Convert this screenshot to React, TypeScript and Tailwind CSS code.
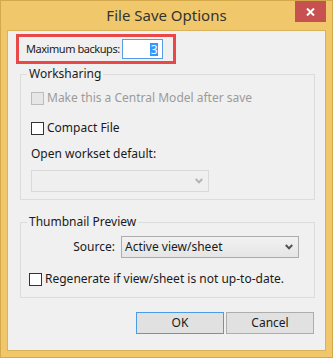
import React from "react"

const FONT = "font-['Segoe_UI','Noto_Sans',sans-serif]"

function Chevron({ color }: { color: string }) {
  return (
    <svg width="8" height="6" viewBox="0 0 8 6" className="shrink-0">
      <polyline points="0.8,1 4,4.4 7.2,1" fill="none" stroke={color} strokeWidth="2" />
    </svg>
  )
}

function Checkbox({ disabled, label }: { disabled?: boolean; label: string }) {
  return (
    <div className="flex items-center gap-[3px] h-[16px]">
      <div
        className={`w-[13px] h-[13px] border ${
          disabled ? "border-[#bcbcbc] bg-[#e6e6e6]" : "border-[#333333] bg-white"
        }`}
      />
      <span className={disabled ? "text-[#9b9b9b]" : "text-[#1a1a1a]"}>{label}</span>
    </div>
  )
}

function Group({
  title,
  className,
  children,
}: {
  title: string
  className: string
  children: React.ReactNode
}) {
  return (
    <div className={`relative border border-[#dcdcdc] ${className}`}>
      <span className="absolute -top-[9px] left-[6px] bg-[#f0f0f0] px-[2px] leading-[16px] text-[#1a1a1a]">
        {title}
      </span>
      {children}
    </div>
  )
}

export default function App() {
  return (
    <div
      className={`relative w-[333px] h-[358px] bg-[#f0c86b] border border-[#d4a94c] flex flex-col text-[12px] ${FONT}`}
    >
      <div className="h-[29px] flex items-center justify-center text-[15px] text-[#333333]">
        File Save Options
      </div>
      <button className="absolute top-0 right-[6px] w-[31px] h-[21px] bg-[#c75050] flex items-center justify-center">
        <svg width="9" height="8" viewBox="0 0 9 8">
          <path d="M1 0.5 L8 7.5 M8 0.5 L1 7.5" stroke="white" strokeWidth="2" />
        </svg>
      </button>

      <div className="ml-[6px] w-[319px] h-[321px] bg-[#f0f0f0] border border-[#d9b25c] flex flex-col">
        <div className="ml-[8px] mt-[3px] w-[160px] h-[30px] border-[3px] border-[#e84848] flex items-center pl-[7px]">
          <span className="whitespace-nowrap text-[11px] tracking-[-0.45px] text-[#1a1a1a]">
            Maximum backups:
          </span>
          <div className="shrink-0 ml-auto mr-[10px] w-[41px] h-[20px] bg-white border border-[#569de5] flex items-center justify-end pr-[4px]">
            <span className="bg-[#3399ff] text-white leading-[13px] px-[0.5px]">3</span>
          </div>
        </div>

        <Group title="Worksharing" className="ml-[12px] mt-[10px] w-[295px] h-[126px] pl-[10px]">
          <div className="mt-[15px]">
            <Checkbox disabled label="Make this a Central Model after save" />
          </div>
          <div className="mt-[14px]">
            <Checkbox label="Compact File" />
          </div>
          <div className="mt-[10px] leading-[16px] text-[#1a1a1a]">Open workset default:</div>
          <div className="mt-[8px] w-[178px] h-[22px] border border-[#d9d9d9] bg-[#efefef] flex items-center justify-end pr-[5px]">
            <Chevron color="#b3b3b3" />
          </div>
        </Group>

        <Group title="Thumbnail Preview" className="ml-[12px] mt-[22px] w-[295px] h-[76px]">
          <div className="mt-[13px] flex items-center">
            <span className="w-[94px] text-right text-[#1a1a1a]">Source:</span>
            <div className="ml-[6px] w-[178px] h-[22px] border border-[#acacac] bg-gradient-to-b from-[#f2f2f2] to-[#e5e5e5] flex items-center pl-[3px] pr-[5px]">
              <span className="flex-1 text-[#1a1a1a]">Active view/sheet</span>
              <Chevron color="#505050" />
            </div>
          </div>
          <div className="mt-[13px] ml-[8px]">
            <Checkbox label="Regenerate if view/sheet is not up-to-date." />
          </div>
        </Group>

        <div className="mt-[14px] mr-[11px] flex justify-end gap-[2px]">
          <button className="w-[88px] h-[22px] bg-[#e1e1e1] border border-[#4a9ce6] text-[#1a1a1a]">
            OK
          </button>
          <button className="w-[88px] h-[22px] bg-[#e1e1e1] border border-[#adadad] text-[#1a1a1a]">
            Cancel
          </button>
        </div>
      </div>
    </div>
  )
}
